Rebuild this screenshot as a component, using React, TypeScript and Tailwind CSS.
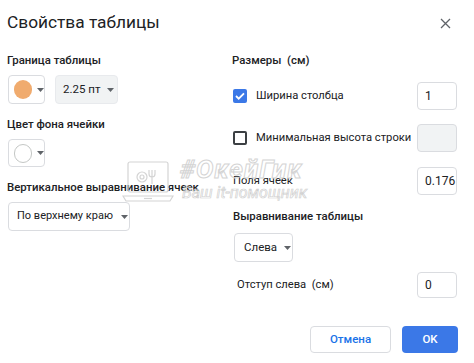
import React from 'react';

function Caret() {
  return (
    <svg width="7" height="4" viewBox="0 0 7 4" className="shrink-0">
      <path d="M0 0h7L3.5 4z" fill="#5f6368" />
    </svg>
  );
}

function NumInput({ value, disabled }: { value?: string; disabled?: boolean }) {
  return (
    <div
      className={`w-[40px] shrink-0 h-full rounded-[4px] border border-[#dadce0] pl-[7px] flex items-center overflow-hidden whitespace-nowrap text-[12px] text-[#202124] ${
        disabled ? 'bg-[#f1f3f4]' : 'bg-white'
      }`}
    >
      {value}
    </div>
  );
}

export default function App() {
  return (
    <div
      className="relative w-[474px] h-[363px] bg-white overflow-hidden pt-[12px] text-[#202124] whitespace-nowrap"
      style={{ fontFamily: 'Roboto, "Noto Sans", Arial, sans-serif' }}
    >
      {/* Header */}
      <div className="flex items-center justify-between h-[22px] pl-[7px] pr-[23px]">
        <div className="text-[17.3px] leading-none">Свойства таблицы</div>
        <svg width="11" height="11" viewBox="0 0 11 11">
          <path d="M1 1l9 9M10 1l-9 9" stroke="#5f6368" strokeWidth="1.3" />
        </svg>
      </div>

      {/* Body */}
      <div className="flex mt-[19px] pl-[7px] pr-[17px]">
        {/* Left column */}
        <div className="w-[225px] shrink-0 flex flex-col">
          <div className="h-[16px] flex items-center text-[11.4px] font-medium">Граница таблицы</div>
          <div className="flex gap-[10px] mt-[6px] h-[29px] pl-[1px]">
            <div className="w-[37px] h-full rounded-[4px] border border-[#dadce0] flex items-center pl-[5px] gap-[5px]">
              <div className="w-[19px] h-[19px] rounded-full bg-[#f0ab6e]" />
              <Caret />
            </div>
            <div className="w-[63px] h-full rounded-[4px] border border-[#e8eaed] bg-[#f1f3f4] flex items-center pl-[7px] gap-[7px] text-[11.5px]">
              2.25 пт
              <Caret />
            </div>
          </div>

          <div className="h-[16px] flex items-center text-[11.4px] font-medium mt-[13px]">Цвет фона ячейки</div>
          <div className="flex mt-[6px] h-[28px] pl-[1px]">
            <div className="w-[37px] h-full rounded-[4px] border border-[#dadce0] flex items-center pl-[5px] gap-[5px]">
              <div className="w-[19px] h-[19px] rounded-full border border-[#c4c7c5] bg-white" />
              <Caret />
            </div>
          </div>

          <div className="h-[16px] flex items-center text-[11.4px] font-medium mt-[13px]">
            Вертикальное выравнивание ячеек
          </div>
          <div className="flex mt-[6px] h-[29px] pl-[1px]">
            <div className="w-[122px] h-full rounded-[4px] border border-[#dadce0] flex items-center pl-[8px] gap-[8px] text-[11px]">
              По верхнему краю
              <Caret />
            </div>
          </div>
        </div>

        {/* Right column */}
        <div className="flex-1 flex flex-col">
          <div className="h-[16px] flex items-center text-[11.4px] font-medium">Размеры&nbsp; (см)</div>

          <div className="flex items-center justify-between mt-[13px] h-[28px]">
            <div className="flex items-center gap-[9px] pl-[1px] text-[11.2px]">
              <div className="w-[14px] h-[14px] rounded-[2px] bg-[#3b78e7] flex items-center justify-center">
                <svg width="10" height="8" viewBox="0 0 10 8">
                  <path d="M1 4l2.7 2.7L9 1.3" stroke="white" strokeWidth="1.8" fill="none" />
                </svg>
              </div>
              Ширина столбца
            </div>
            <NumInput value="1" />
          </div>

          <div className="flex items-center justify-between mt-[14px] h-[28px]">
            <div className="flex items-center gap-[9px] pl-[1px] text-[11.2px]">
              <div className="w-[14px] h-[14px] rounded-[2px] border-2 border-[#3c4043]" />
              Минимальная высота строки
            </div>
            <NumInput disabled />
          </div>

          <div className="flex items-center justify-between mt-[15px] h-[28px]">
            <div className="pl-[1px] text-[11.2px]">Поля ячеек</div>
            <NumInput value="0.176" />
          </div>

          <div className="h-[16px] flex items-center text-[11.4px] font-medium mt-[14px] pl-[1px]">Выравнивание таблицы</div>
          <div className="flex mt-[8px] h-[29px] pl-[2px]">
            <div className="w-[59px] h-full rounded-[4px] border border-[#dadce0] flex items-center pl-[9px] gap-[7px] text-[11.5px]">
              Слева
              <Caret />
            </div>
          </div>

          <div className="flex items-center justify-between mt-[10px] h-[26px]">
            <div className="pl-[5px] text-[11.2px]">Отступ слева&nbsp; (см)</div>
            <NumInput value="0" />
          </div>
        </div>
      </div>

      {/* Footer */}
      <div className="flex justify-end gap-[11px] mt-[28px] pr-[16px]">
        <button className="w-[81px] h-[27px] rounded-[4px] border border-[#dadce0] bg-white text-[11.5px] font-medium text-[#1a73e8]">
          Отмена
        </button>
        <button className="w-[56px] h-[27px] rounded-[4px] bg-[#3b78e7] text-[11.5px] font-medium text-white">
          OK
        </button>
      </div>

      {/* Watermark */}
      <div className="absolute left-[122px] top-[160px] flex items-start gap-[6px] pointer-events-none">
        <svg width="52" height="44" viewBox="0 0 52 44" fill="none" stroke="#d4d4d4" strokeWidth="1.2">
          <rect x="6" y="2" width="40" height="30" rx="2" />
          <path d="M1 36h50l-3 5H4z" />
          <path d="M22 38.5h8" />
          <circle cx="20" cy="17" r="5" />
          <circle cx="20" cy="17" r="2" />
          <path d="M30 10v14M27 10v4a3 3 0 0 0 6 0v-4" />
        </svg>
        <div className="flex flex-col italic mt-[-3px]">
          <div className="text-[26px] leading-[24px] font-bold text-transparent tracking-[1px] [-webkit-text-stroke:1px_#d4d4d4]">
            #ОкейГик
          </div>
          <div className="text-[16px] leading-[18px] text-transparent [-webkit-text-stroke:0.7px_#d0d0d0] ml-[2px] mt-[3px]">
            Ваш it-помощник
          </div>
        </div>
      </div>
    </div>
  );
}
